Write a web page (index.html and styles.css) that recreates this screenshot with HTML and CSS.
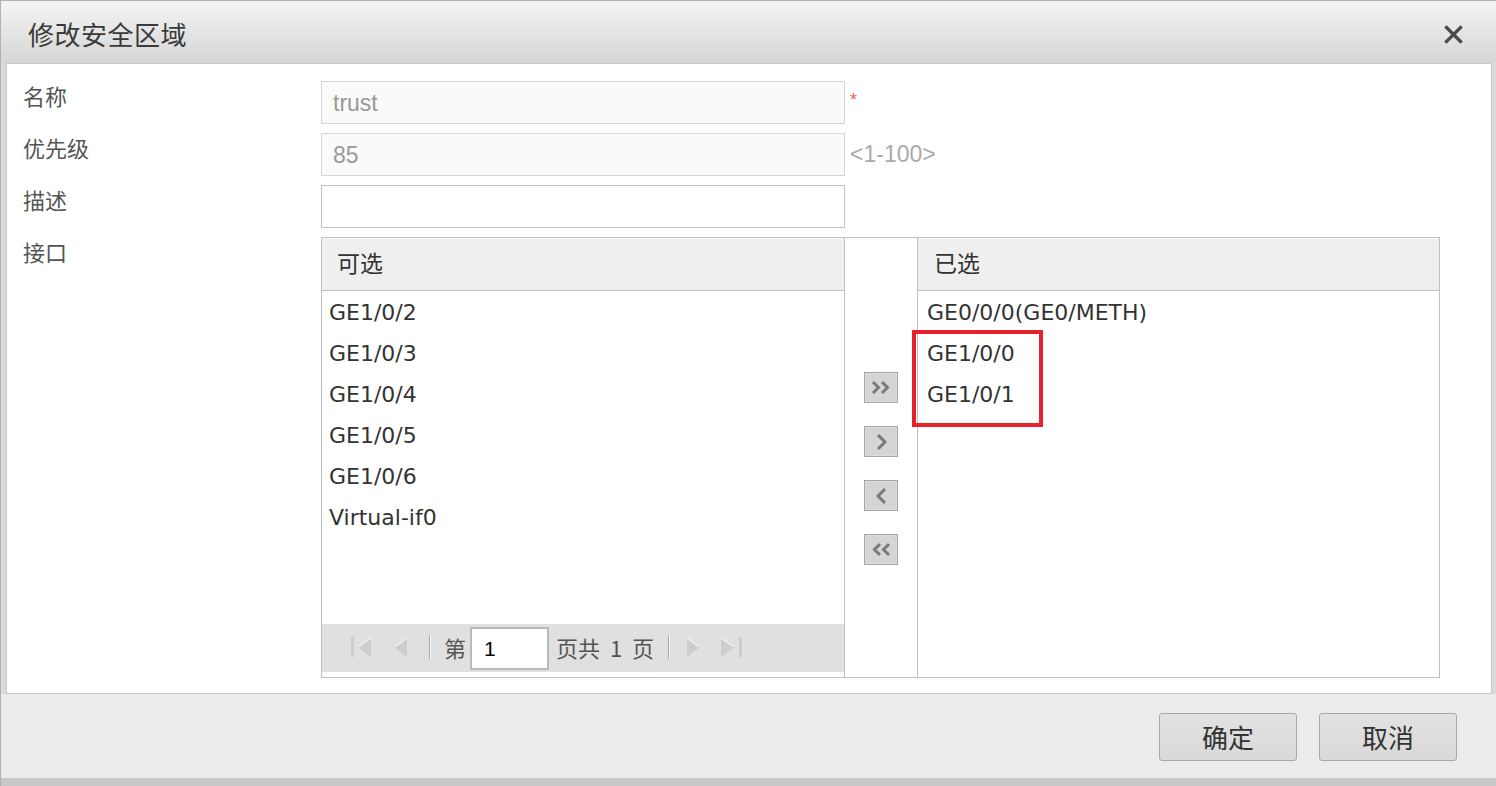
FILE: index.html
```html
<!DOCTYPE html>
<html lang="zh-CN">
<head>
<meta charset="utf-8">
<title>修改安全区域</title>
<link rel="stylesheet" href="styles.css">
</head>
<body>
<div class="dialog">
  <div class="titlebar">
    <span class="title">修改安全区域</span>
    <span class="close">
      <svg width="19" height="19" viewBox="0 0 19 19"><path d="M2.5 2.5 L16.5 16.5 M16.5 2.5 L2.5 16.5" stroke="#4a4a4a" stroke-width="3.2" stroke-linecap="square" fill="none"/></svg>
    </span>
  </div>
  <div class="frame">
    <div class="content">
      <div class="form">
        <div class="label">名称</div>
        <div class="field"><div class="input disabled">trust</div><span class="req">*</span></div>

        <div class="label">优先级</div>
        <div class="field"><div class="input disabled">85</div><span class="hint">&lt;1-100&gt;</span></div>

        <div class="label">描述</div>
        <div class="field"><div class="input"></div></div>

        <div class="label">接口</div>
        <div class="transfer">
          <div class="list list-left">
            <div class="list-head">可选</div>
            <div class="list-body">
              <div class="item">GE1/0/2</div>
              <div class="item">GE1/0/3</div>
              <div class="item">GE1/0/4</div>
              <div class="item">GE1/0/5</div>
              <div class="item">GE1/0/6</div>
              <div class="item">Virtual-if0</div>
            </div>
            <div class="pager">
              <svg class="pg-first" width="22" height="24" viewBox="0 0 22 24"><rect x="1" y="2" width="3" height="20" fill="#cdcdcd"/><polygon points="21,2 7,12 21,22" fill="#cdcdcd"/><polygon points="21,2 7,12 9,12 21,4" fill="#f2f2f2"/></svg>
              <svg class="pg-prev" width="15" height="24" viewBox="0 0 15 24"><polygon points="14,2 1,12 14,22" fill="#cdcdcd"/><polygon points="14,2 1,12 3,12 14,4" fill="#f2f2f2"/></svg>
              <span class="pg-sep"></span>
              <span class="pg-text pg-di">第</span>
              <span class="pg-input">1</span>
              <span class="pg-text pg-total">页共 1 页</span>
              <span class="pg-sep pg-sep2"></span>
              <svg class="pg-next" width="15" height="24" viewBox="0 0 15 24"><polygon points="1,2 14,12 1,22" fill="#cdcdcd"/><polygon points="1,2 14,12 12,12 1,4" fill="#f2f2f2"/></svg>
              <svg class="pg-last" width="23" height="24" viewBox="0 0 23 24"><polygon points="1,2 15,12 1,22" fill="#cdcdcd"/><polygon points="1,2 15,12 13,12 1,4" fill="#f2f2f2"/><rect x="19" y="2" width="3" height="20" fill="#cdcdcd"/></svg>
            </div>
          </div>
          <div class="mid">
            <div class="mv-btn"><svg width="20" height="15" viewBox="0 0 20 15"><path d="M2 2 L7.5 7.5 L2 13 M11 2 L16.5 7.5 L11 13" stroke="#7a7a7a" stroke-width="3" fill="none"/></svg></div>
            <div class="mv-btn"><svg width="13" height="18" viewBox="0 0 13 18"><path d="M3 2 L10 9 L3 16" stroke="#7a7a7a" stroke-width="3" fill="none"/></svg></div>
            <div class="mv-btn"><svg width="13" height="18" viewBox="0 0 13 18"><path d="M10 2 L3 9 L10 16" stroke="#7a7a7a" stroke-width="3" fill="none"/></svg></div>
            <div class="mv-btn"><svg width="20" height="15" viewBox="0 0 20 15"><path d="M9 2 L3.5 7.5 L9 13 M18 2 L12.5 7.5 L18 13" stroke="#7a7a7a" stroke-width="3" fill="none"/></svg></div>
          </div>
          <div class="list list-right">
            <div class="list-head">已选</div>
            <div class="list-body">
              <div class="item">GE0/0/0(GE0/METH)</div>
              <div class="item">GE1/0/0</div>
              <div class="item">GE1/0/1</div>
            </div>
            <div class="highlight"></div>
          </div>
        </div>
      </div>
    </div>
  </div>
  <div class="footer">
    <button class="btn">确定</button>
    <button class="btn">取消</button>
  </div>
  <div class="bottombar"></div>
</div>
</body>
</html>
```

FILE: styles.css
```css
* { box-sizing: border-box; }

html, body {
  margin: 0;
  padding: 0;
  width: 1496px;
  height: 786px;
  overflow: hidden;
  background: #ffffff;
}

body {
  font-family: "Noto Sans CJK SC", "Liberation Sans", sans-serif;
  color: #333;
}

.dialog {
  width: 1496px;
  height: 786px;
  display: flex;
  flex-direction: column;
  border-left: 1px solid #b2b2b2;
  border-top: 1px solid #b2b2b2;
  background: #dadada;
}

.titlebar {
  height: 62px;
  flex: none;
  display: flex;
  align-items: center;
  justify-content: space-between;
  padding: 2px 33px 0 27px;
  background: linear-gradient(#f4f4f4, #d5d5d5);
}

.title {
  font-size: 26px;
  color: #3a3a3a;
  letter-spacing: 0.5px;
}

.close {
  display: flex;
  align-items: center;
  margin-top: 2px;
}

.frame {
  flex: none;
  height: 631px;
  padding: 0 4px 0 5px;
  background: #dadada;
}

.content {
  height: 631px;
  background: #ffffff;
  border: 1px solid #c8c8c8;
  padding: 17px 0 0 16px;
}

.form {
  display: grid;
  grid-template-columns: 298px auto;
  row-gap: 9px;
  align-items: start;
}

.label {
  font-size: 22px;
  line-height: 28px;
  color: #555;
}

.field {
  display: flex;
  align-items: center;
}

.input {
  width: 524px;
  height: 43px;
  border: 1px solid #c2c2ca;
  background: #ffffff;
  padding-left: 11px;
  font-family: "Liberation Sans", Arial, sans-serif;
  font-size: 23px;
  line-height: 43px;
  color: #999;
}

.input.disabled {
  border-color: #d6d6d6;
  background: #fafafa;
}

.req {
  color: #f06060;
  font-family: "Liberation Sans", Arial, sans-serif;
  font-size: 18px;
  margin-left: 5px;
  margin-top: -4px;
  align-self: center;
}

.hint {
  color: #aaa;
  font-family: "Liberation Sans", Arial, sans-serif;
  font-size: 23px;
  margin-left: 5px;
}

.transfer {
  width: 1119px;
  height: 441px;
  border: 1px solid #c0c0c8;
  display: flex;
}

.list {
  display: flex;
  flex-direction: column;
  position: relative;
}

.list-left {
  width: 523px;
  border-right: 1px solid #c0c0c8;
}

.list-right {
  flex: 1;
}

.list-head {
  height: 53px;
  flex: none;
  background: #efefef;
  border-bottom: 1px solid #c0c0c8;
  box-shadow: inset 0 1px 0 #fafafa;
  font-size: 23px;
  line-height: 48px;
  padding-left: 15px;
  color: #333;
}

.list-right .list-head {
  padding-left: 16px;
}

.list-body {
  flex: 1;
  padding-top: 1px;
}

.item {
  height: 41px;
  line-height: 42px;
  padding-left: 7px;
  font-family: "DejaVu Sans", Verdana, sans-serif;
  font-size: 22px;
  color: #333;
  white-space: nowrap;
}

.list-right .item {
  padding-left: 9px;
}

.pager {
  flex: none;
  height: 48px;
  margin-bottom: 5px;
  background: #e0e0e0;
  display: flex;
  align-items: center;
  padding-left: 28px;
  padding-bottom: 3px;
}

.pg-prev { margin-left: 21px; }

.pg-sep {
  width: 2px;
  height: 24px;
  margin-left: 21px;
  border-left: 1px solid #a8a8a8;
  border-right: 1px solid #f8f8f8;
}

.pg-text {
  font-size: 22px;
  color: #555;
}

.pg-di { margin-left: 13px; }

.pg-input {
  width: 79px;
  height: 43px;
  margin-left: 4px;
  margin-top: 3px;
  border: 2px solid #b9b9b9;
  background: #fff;
  padding-left: 12px;
  font-family: "Liberation Sans", Arial, sans-serif;
  font-size: 21px;
  line-height: 39px;
  color: #000;
}

.pg-total {
  margin-left: 7px;
  word-spacing: 5px;
}

.pg-sep2 { margin-left: 14px; }

.pg-next { margin-left: 16px; }

.pg-last { margin-left: 19px; }

.mid {
  width: 73px;
  border-right: 1px solid #c0c0c8;
  display: flex;
  flex-direction: column;
  align-items: center;
  padding-top: 134px;
  gap: 23px;
}

.mv-btn {
  width: 34px;
  height: 31px;
  border: 1px solid #a6a6a6;
  background: #d5d5d5;
  box-shadow: inset 0 0 0 1px #dcdcdc;
  display: flex;
  align-items: center;
  justify-content: center;
}

.highlight {
  position: absolute;
  left: -6px;
  top: 92px;
  width: 131px;
  height: 97px;
  border: 4px solid #e8202a;
}

.footer {
  flex: none;
  height: 84px;
  background: #ececec;
  display: flex;
  justify-content: flex-end;
  align-items: flex-start;
  gap: 22px;
  padding: 19px 39px 0 0;
}

.btn {
  width: 138px;
  height: 48px;
  border: 1px solid #a8a8a8;
  border-radius: 3px;
  background: linear-gradient(#e2e2e2, #d9d9d9);
  font-family: "Noto Sans CJK SC", "Liberation Sans", sans-serif;
  font-size: 26px;
  color: #333;
  padding: 0;
  line-height: 44px;
}

.bottombar {
  flex: none;
  height: 8px;
  background: #c8c8c8;
}
```
